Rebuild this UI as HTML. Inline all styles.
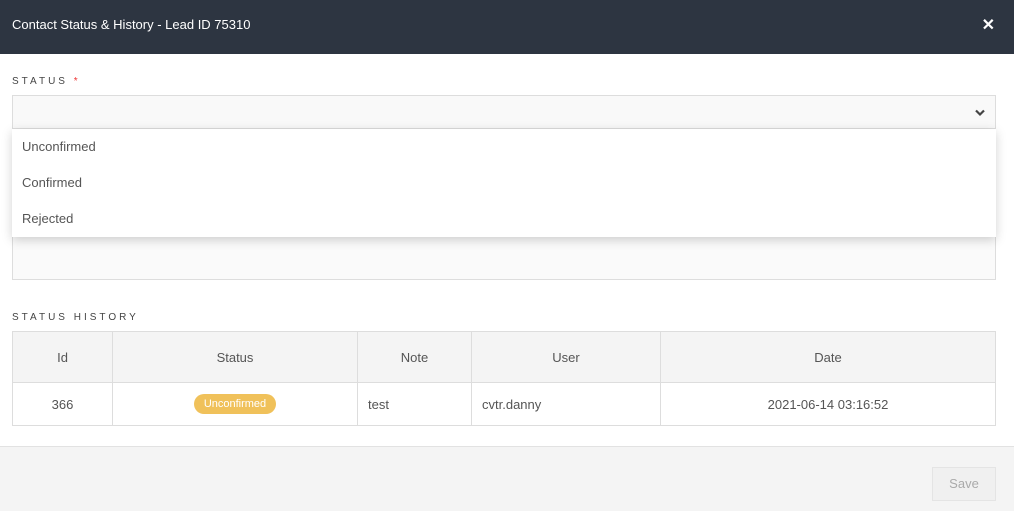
<!DOCTYPE html>
<html><head><style>
*{box-sizing:border-box;margin:0;padding:0}
body{width:1014px;height:511px;overflow:hidden;background:#fff;font-family:"Liberation Sans",sans-serif;position:relative;color:#555}
.hd{position:absolute;left:0;top:0;width:1014px;height:54px;background:#2d3541;color:#fff;font-size:13px;padding:17px 0 0 12px}
.x{position:absolute;right:19px;top:15px;font-size:16px;color:#fff;font-weight:bold}
.lbl{position:absolute;left:12px;font-size:10px;letter-spacing:3px;color:#444}
.sel{position:absolute;left:12px;top:95px;width:984px;height:34px;background:#f9f9f9;border:1px solid #ddd}
.ta{position:absolute;left:12px;top:140px;width:984px;height:140px;background:#fafafa;border:1px solid #ddd}
.dd{position:absolute;left:12px;top:129px;width:984px;height:108px;background:#fff;box-shadow:0 3px 10px rgba(0,0,0,.18);font-size:13px;color:#555}
.dd div{height:36px;line-height:36px;padding-left:10px}
table{position:absolute;left:12px;top:331px;width:984px;border-collapse:collapse;font-size:13px;color:#555}
td,th{border:1px solid #ddd;font-weight:normal;text-align:center}
th{background:#f4f4f4;height:51px}
td{height:43px}
.b{display:inline-block;background:#f0c15a;color:#fff;font-size:11px;border-radius:11px;padding:4px 10px}
.ft{position:absolute;left:0;top:446px;width:1014px;height:65px;background:#f4f4f4;border-top:1px solid #e2e2e2}
.sv{position:absolute;left:932px;top:20px;width:64px;height:34px;border:1px solid #e4e4e4;background:#f0f0f0;color:#aaa;font-size:13px;text-align:center;line-height:32px}
</style></head><body>
<div class="hd">Contact Status &amp; History - Lead ID 75310<span class="x">✕</span></div>
<div class="lbl" style="top:76px">STATUS <span style="color:#e33">*</span></div>
<div class="ta"></div>
<div class="sel"><svg style="position:absolute;right:10px;top:13px" width="10" height="8" viewBox="0 0 10 8"><path d="M1 1.5L5 5.5L9 1.5" stroke="#444" stroke-width="2.2" fill="none"/></svg></div>
<div class="dd"><div>Unconfirmed</div><div>Confirmed</div><div>Rejected</div></div>
<div class="lbl" style="top:312px">STATUS HISTORY</div>
<table>
<tr><th style="width:100px">Id</th><th style="width:245px">Status</th><th style="width:114px">Note</th><th style="width:189px">User</th><th>Date</th></tr>
<tr><td>366</td><td><span class="b">Unconfirmed</span></td><td style="text-align:left;padding-left:10px">test</td><td style="text-align:left;padding-left:10px">cvtr.danny</td><td>2021-06-14 03:16:52</td></tr>
</table>
<div class="ft"><div class="sv">Save</div></div>
</body></html>
